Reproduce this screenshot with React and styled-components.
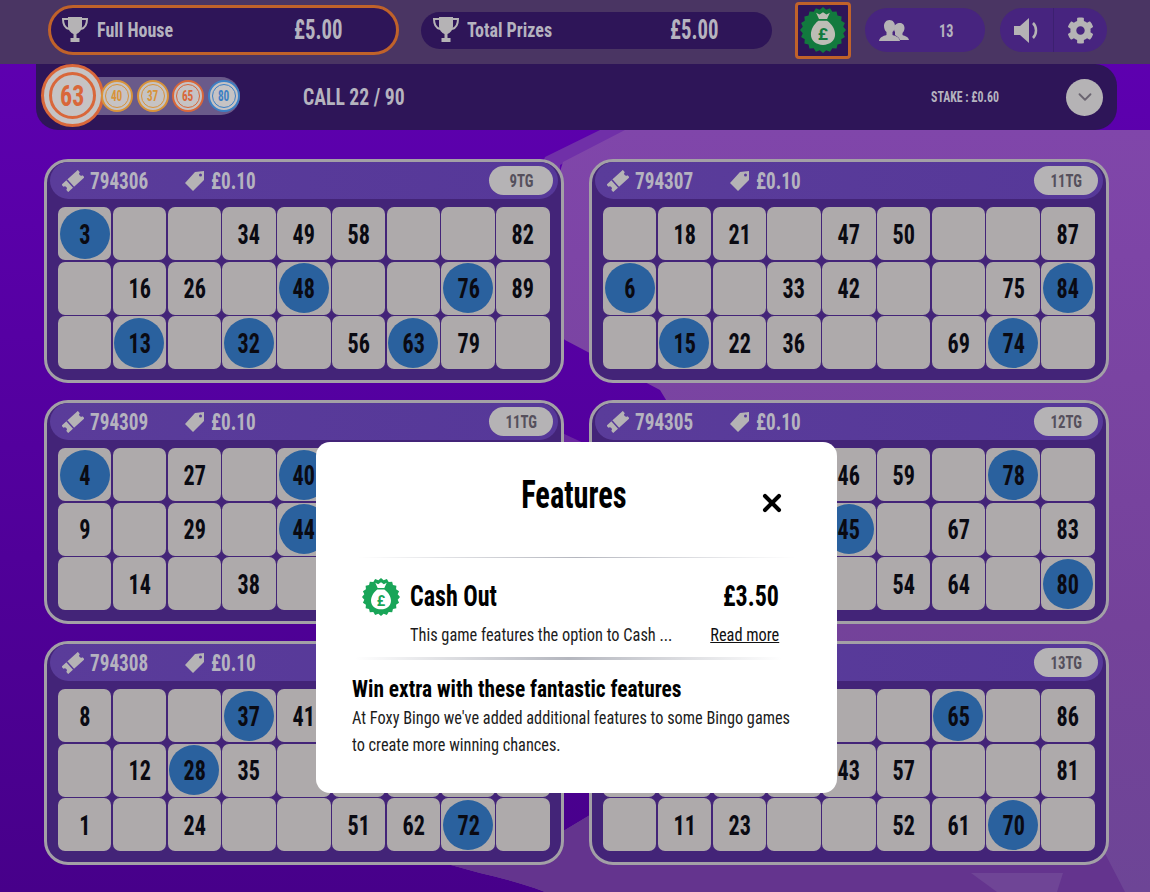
import React from 'react';
import styled, { createGlobalStyle } from 'styled-components';
import { X, ChevronDown } from 'lucide-react';
import { FaCog } from 'react-icons/fa';

const fontStack = `"Roboto Condensed", "Liberation Sans Narrow", Roboto, "Liberation Sans", sans-serif`;

const Global = createGlobalStyle`
	html, body { margin: 0; padding: 0; }
	body { font-family: ${fontStack}; background: #5a00a6; }
	* { box-sizing: border-box; }
`;

const Page = styled.div`
	position: relative;
	width: 1150px;
	height: 892px;
	overflow: hidden;
	background: #5a00a6;
`;

const Backdrop = styled.svg`
	position: absolute;
	inset: 0;
`;

const Content = styled.div`
	position: relative;
	display: flex;
	flex-direction: column;
`;

// the original face is taller and narrower than anything installed
const Fit = styled.span`
	display: inline-block;
	white-space: nowrap;
	transform: scaleX(${(p) => p.$x || 0.82});
	transform-origin: ${(p) => p.$origin || 'left'} center;
`;

const Header = styled.header`
	height: 64px;
	background: #4a3563;
	display: flex;
	align-items: center;
	padding: 0 0 4px 48px;
`;

const Prize = styled.div`
	display: flex;
	align-items: center;
	height: ${(p) => (p.$active ? '50px' : '37px')};
	width: 351px;
	margin-right: ${(p) => (p.$active ? '22px' : '23px')};
	border-radius: 25px;
	background: #2e1558;
	border: ${(p) => (p.$active ? '3px solid #c0622a' : 'none')};
	padding-left: ${(p) => (p.$active ? '10px' : '11px')};
	color: #b5b3bf;
	font-weight: 700;
`;

const PrizeName = styled.span`
	font-size: 20px;
	margin-left: ${(p) => (p.$wide ? '7px' : '8px')};
	width: ${(p) => (p.$wide ? '203px' : '197px')};
`;

const PrizeValue = styled.span`
	font-size: 27px;
`;

const BagButton = styled.div`
	width: 56px;
	height: 57px;
	background: #2e1558;
	border: 3px solid #c0622a;
	border-radius: 4px;
	display: flex;
	align-items: center;
	justify-content: center;
	margin-right: 14px;
`;

const Pill = styled.div`
	height: 44px;
	border-radius: 22px;
	background: #47247f;
	color: #b5b3bf;
	display: flex;
	align-items: center;
`;

const PlayersPill = styled(Pill)`
	width: 120px;
	padding-left: 14px;
	margin-right: 15px;
	font-size: 19px;
	font-weight: 700;
	gap: 30px;
`;

const ControlsPill = styled(Pill)`
	width: 107px;
`;

const ControlSlot = styled.div`
	flex: 1;
	height: 100%;
	display: flex;
	align-items: center;
	justify-content: center;
	border-left: ${(p) => (p.$divider ? '1px solid #3c2070' : 'none')};
`;

const CallBar = styled.div`
	position: relative;
	height: 66px;
	width: 1081px;
	margin-left: 36px;
	background: #2e1558;
	border-radius: 0 22px 22px 22px;
	display: flex;
	align-items: center;
	color: #b5b3bf;
	font-weight: 700;
`;

const Balls = styled.div`
	display: flex;
	align-items: center;
	width: 267px;
	height: 38px;
	flex: none;
`;

const BallTray = styled.div`
	display: flex;
	align-items: center;
	gap: 3.5px;
	height: 38px;
	width: 172px;
	margin-left: 32px;
	margin-top: -3px;
	padding-left: 33px;
	border-radius: 0 19px 19px 0;
	background: #6a5a8a;
`;

const Ball = styled.div`
	position: relative;
	width: ${(p) => p.$size}px;
	height: ${(p) => p.$size}px;
	flex: none;
	border-radius: 50%;
	background: #c6c3c4;
	border: ${(p) => (p.$big ? 3 : 2)}px solid ${(p) => p.$color};
	display: flex;
	align-items: center;
	justify-content: center;
	color: ${(p) => p.$color};
	font-size: ${(p) => (p.$big ? 30 : 15)}px;
	font-weight: 700;

	&::after {
		content: '';
		position: absolute;
		inset: ${(p) => (p.$big ? 5 : 2)}px;
		border-radius: 50%;
		border: ${(p) => (p.$big ? 3 : 1)}px solid ${(p) => p.$color};
	}
`;

const BigBall = styled(Ball)`
	position: absolute;
	left: 5px;
	top: 0;
`;

const CallText = styled.div`
	font-size: 24px;
	width: 628px;
`;

const Stake = styled.div`
	font-size: 15px;
	width: 135px;
`;

const Chevron = styled.div`
	width: 37px;
	height: 37px;
	border-radius: 50%;
	background: #b5b3b5;
	display: flex;
	align-items: center;
	justify-content: center;
	color: #6a6470;
`;

const Cards = styled.div`
	display: grid;
	grid-template-columns: 520px 520px;
	column-gap: 25px;
	row-gap: 17px;
	padding: 29px 0 0 44px;
`;

const Card = styled.section`
	height: 224px;
	border: 3px solid #a3a0a6;
	border-radius: 24px;
	background: #432478;
	padding: 0 11px;
`;

const CardHead = styled.div`
	height: 37px;
	margin: 0 -8px;
	padding: 0 5px 0 12px;
	border-radius: 20px;
	background: linear-gradient(90deg, #5a3c9a, #563899);
	display: flex;
	align-items: center;
	color: #b5b3bf;
	font-weight: 700;
	font-size: 24px;
`;

const HeadItem = styled.span`
	display: flex;
	align-items: center;
	gap: 6px;
	width: 122px;
`;

const Tg = styled.span`
	margin-left: auto;
	width: 64px;
	height: 29px;
	border-radius: 15px;
	background: #b5b3b5;
	color: #55505c;
	font-size: 19px;
	font-weight: 700;
	display: flex;
	align-items: center;
	justify-content: center;
`;

const Grid = styled.div`
	display: grid;
	grid-template-columns: repeat(9, 53.4px);
	grid-auto-rows: 53px;
	column-gap: 1.4px;
	row-gap: 1.5px;
	margin-top: 8px;
`;

const Cell = styled.div`
	border-radius: 7px;
	background: #aeaaab;
	display: flex;
	align-items: center;
	justify-content: center;
	font-size: 27px;
	font-weight: 700;
	color: #0a0a12;
	padding-top: 2px;
`;

const Dab = styled.span`
	width: 50px;
	height: 50px;
	margin-top: -2px;
	border-radius: 50%;
	background: #2a619e;
	display: flex;
	align-items: center;
	justify-content: center;
	padding-top: 2px;
`;

const Modal = styled.div`
	position: absolute;
	left: 316px;
	top: 442px;
	width: 521px;
	height: 351px;
	background: #fff;
	border-radius: 14px;
	color: #000;
	padding: 0 36px;
`;

const ModalTitle = styled.h2`
	margin: 0;
	padding: 31px 6px 0 0;
	height: 115px;
	text-align: center;
	font-size: 38px;
	line-height: 44px;
	font-weight: 700;
`;

const Close = styled.div`
	position: absolute;
	right: 51px;
	top: 47px;
	display: flex;
`;

const Rule = styled.div`
	height: ${(p) => p.$h}px;
	margin: 0 ${(p) => p.$right}px 0 ${(p) => p.$left}px;
	background: linear-gradient(90deg, transparent, #b4b6be 50%, transparent);
`;

const Feature = styled.div`
	display: grid;
	grid-template-columns: 48px minmax(0, 1fr) auto;
	padding: 0 22px 0 10px;
	height: 99px;
`;

const BagSlot = styled.div`
	padding-top: 20px;
`;

const FeatureName = styled.div`
	font-size: 30px;
	line-height: 36px;
	font-weight: 700;
	padding-top: 20px;
	height: 58px;
`;

const FeaturePrice = styled(FeatureName)`
	text-align: right;
`;

const FeatureText = styled.div`
	font-size: 19px;
	line-height: 26px;
	margin-top: 6px;
	color: #1c1c1c;
`;

const ReadMore = styled(FeatureText)`
	text-align: right;
`;

const ReadLink = styled(Fit)`
	color: #111;
	text-decoration: underline;
`;

const WinTitle = styled.h3`
	margin: 14px 0 0;
	font-size: 24px;
	line-height: 30px;
	font-weight: 700;
`;

const WinText = styled.p`
	margin: 0;
	font-size: 18px;
	line-height: 27px;
	color: #1c1c1c;
`;

const Trophy = () => (
	<svg width="28" height="28" viewBox="0 0 28 28" fill="#b5b3b5">
		<path d="M7 1h14v9c0 4-3 7-5.500 8v4h3v4H9.500v-4h3v-4C10 17 7 14 7 10z" />
		<path
			d="M7 3H2c0 6 2 9 6 10M21 3h5c0 6-2 9-6 10"
			fill="none"
			stroke="#b5b3b5"
			strokeWidth="2"
		/>
	</svg>
);

const Players = () => (
	<svg width="30" height="23" viewBox="0 0 30 23" fill="#b5b3b5">
		<path d="M21 4c3 0 4.500 2.500 4.500 5 0 2-1 4-2 5v2c2.500 1 6 2 6.500 5H21c-1-3-4-4-5-5v-3c-1-1-1-3-1-4 0-3 3-5 6-5z" />
		<path d="M10.500 1c3.500 0 5.500 3 5.500 6 0 2.500-1 5-2.500 6v3c3.500 1 7 2.500 7.500 6H0c.5-3.500 4-5 7.500-6v-3C6 12 5 9.500 5 7c0-3 2-6 5.500-6z" />
	</svg>
);

const Speaker = () => (
	<svg width="27" height="27" viewBox="0 0 27 27" fill="#b5b3b5">
		<path d="M1 9h6l9-8v25l-9-8H1z" />
		<path d="M20 6c4 4 4 11 0 15" fill="none" stroke="#b5b3b5" strokeWidth="2.500" />
	</svg>
);

const Ticket = () => (
	<svg width="22" height="22" viewBox="0 0 22 22" fill="#b5b3b5">
		<g transform="rotate(-42 11 11)">
			<path
				fillRule="evenodd"
				d="M0 6h22v3a2 2 0 0 0 0 4v3H0v-3a2 2 0 0 0 0-4zM6.500 6v10h1.500V6z"
			/>
		</g>
	</svg>
);

const Tag = () => (
	<svg width="21" height="22" viewBox="0 0 21 22" fill="#b5b3b5">
		<path
			fillRule="evenodd"
			d="M11 2l9-1v9L9 21 1 13zM16.500 3.500a1.500 1.500 0 1 0 0 3 1.500 1.500 0 0 0 0-3z"
		/>
	</svg>
);

// scalloped badge with a money bag in the middle
const BagBadge = ({ size, green, light }) => {
	const points = [];
	const teeth = 20;
	for (let i = 0; i < teeth * 2; i++) {
		const r = i % 2 === 0 ? 20 : 17.8;
		const a = (Math.PI * i) / teeth;
		points.push(`${20 + r * Math.cos(a)},${20 + r * Math.sin(a)}`);
	}
	return (
		<svg width={size} height={size} viewBox="0 0 40 40">
			<polygon points={points.join(' ')} fill={green} />
			<path
				d="M14 5l3 1.500L20 4.500l3 2L26 5l-2.500 5.500h-7zM16.500 12h7c4.500 3 7 7.500 7 12 0 5.500-4.500 9-10.500 9s-10.500-3.500-10.500-9c0-4.500 2.500-9 6.500-12z"
				fill={light}
			/>
			<text x="20" y="29" textAnchor="middle" fontSize="15" fontWeight="700" fontFamily="Roboto" fill={green}>
				£
			</text>
		</svg>
	);
};

const cards = [
	{
		id: '794306',
		tg: '9TG',
		rows: [
			['3', '', '', '34', '49', '58', '', '', '82'],
			['', '16', '26', '', '48', '', '', '76', '89'],
			['', '13', '', '32', '', '56', '63', '79', ''],
		],
		marked: ['3', '48', '76', '13', '32', '63'],
	},
	{
		id: '794307',
		tg: '11TG',
		rows: [
			['', '18', '21', '', '47', '50', '', '', '87'],
			['6', '', '', '33', '42', '', '', '75', '84'],
			['', '15', '22', '36', '', '', '69', '74', ''],
		],
		marked: ['6', '84', '15', '74'],
	},
	{
		id: '794309',
		tg: '11TG',
		rows: [
			['4', '', '27', '', '40', '', '', '', ''],
			['9', '', '29', '', '44', '', '', '', ''],
			['', '14', '', '38', '', '', '', '', ''],
		],
		marked: ['4', '40', '44'],
	},
	{
		id: '794305',
		tg: '12TG',
		rows: [
			['', '', '', '', '46', '59', '', '78', ''],
			['', '', '', '', '45', '', '67', '', '83'],
			['', '', '', '', '', '54', '64', '', '80'],
		],
		marked: ['78', '45', '80'],
	},
	{
		id: '794308',
		tg: '10TG',
		rows: [
			['8', '', '', '37', '41', '', '', '', ''],
			['', '12', '28', '35', '', '', '', '', ''],
			['1', '', '24', '', '', '51', '62', '72', ''],
		],
		marked: ['37', '28', '72'],
	},
	{
		id: '794310',
		tg: '13TG',
		rows: [
			['', '', '', '', '', '', '65', '', '86'],
			['', '', '', '', '43', '57', '', '', '81'],
			['', '11', '23', '', '', '52', '61', '70', ''],
		],
		marked: ['65', '70'],
	},
];

const recent = [
	{ n: '40', color: '#d8933a' },
	{ n: '37', color: '#d8933a' },
	{ n: '65', color: '#d9673a' },
	{ n: '80', color: '#3d7fc4' },
];

const App = () => (
	<Page>
		<Global />
		<Backdrop width="1150" height="892" viewBox="0 0 1150 892">
			<defs>
				<linearGradient id="dark" x1="0" y1="0" x2="0" y2="1">
					<stop offset="0" stopColor="#5f00b2" />
					<stop offset="1" stopColor="#47008a" />
				</linearGradient>
				<linearGradient id="light" x1="0" y1="0" x2="0" y2="1">
					<stop offset="0" stopColor="#8046aa" />
					<stop offset="0.65" stopColor="#74429a" />
					<stop offset="1" stopColor="#6d4596" />
				</linearGradient>
			</defs>
			<rect width="1150" height="892" fill="url(#dark)" />
			<path d="M545 157 600 130h30l-70 35v20h-25z" fill="#7030a8" />
			<path d="M560 432l30 14v20h-30z" fill="#6a28a0" />
			<path
				d="M625 130H1150V892H545C520 882 500 878 480 873L440 862 565 830 590 815 800 620 660 390 565 340 520 300 563 162z"
				fill="url(#light)"
			/>
			<path d="M440 862 565 830 590 815H1085L1125 892H545C520 882 500 878 480 873z" fill="#64348e" />
			<path d="M971 873h92l-6 19h-60z" fill="#6f4596" />
		</Backdrop>
		<Content>
			<Header>
				<Prize $active>
					<Trophy />
					<PrizeName>
						<Fit $x={0.9}>Full House</Fit>
					</PrizeName>
					<PrizeValue>
						<Fit $x={0.77}>£5.00</Fit>
					</PrizeValue>
				</Prize>
				<Prize>
					<Trophy />
					<PrizeName $wide>
						<Fit $x={0.9}>Total Prizes</Fit>
					</PrizeName>
					<PrizeValue>
						<Fit $x={0.77}>£5.00</Fit>
					</PrizeValue>
				</Prize>
				<BagButton>
					<BagBadge size={46} green="#127a3e" light="#bdbdb5" />
				</BagButton>
				<PlayersPill>
					<Players />
					<Fit $x={0.75}>13</Fit>
				</PlayersPill>
				<ControlsPill>
					<ControlSlot>
						<Speaker />
					</ControlSlot>
					<ControlSlot $divider>
						<FaCog size={27} color="#b5b3b5" />
					</ControlSlot>
				</ControlsPill>
			</Header>
			<CallBar>
				<BigBall $big $size={63} $color="#d9673a">
					<Fit $x={0.8} $origin="center">63</Fit>
				</BigBall>
				<Balls>
					<BallTray>
						{recent.map((b) => (
							<Ball key={b.n} $size={32} $color={b.color}>
								<Fit $x={0.75} $origin="center">{b.n}</Fit>
							</Ball>
						))}
					</BallTray>
				</Balls>
				<CallText>
					<Fit $x={0.82}>CALL 22 / 90</Fit>
				</CallText>
				<Stake>
					<Fit $x={0.79}>STAKE : £0.60</Fit>
				</Stake>
				<Chevron>
					<ChevronDown size={22} />
				</Chevron>
			</CallBar>
			<Cards>
				{cards.map((card) => (
					<Card key={card.id}>
						<CardHead>
							<HeadItem>
								<Ticket />
								<Fit $x={0.8}>{card.id}</Fit>
							</HeadItem>
							<HeadItem>
								<Tag />
								<Fit $x={0.8}>£0.10</Fit>
							</HeadItem>
							<Tg>
								<Fit $x={0.78} $origin="center">{card.tg}</Fit>
							</Tg>
						</CardHead>
						<Grid>
							{card.rows.flat().map((n, i) => (
								<Cell key={i}>
									{card.marked.includes(n) ? (
										<Dab>
											<Fit $origin="center">{n}</Fit>
										</Dab>
									) : (
										<Fit $origin="center">{n}</Fit>
									)}
								</Cell>
							))}
						</Grid>
					</Card>
				))}
			</Cards>
		</Content>
		<Modal>
			<ModalTitle>
				<Fit $x={0.8} $origin="center">Features</Fit>
			</ModalTitle>
			<Close>
				<X size={28} strokeWidth={3.5} />
			</Close>
			<Rule $h={1} $left={6} $right={6} />
			<Feature>
				<BagSlot>
					<BagBadge size={38} green="#19a558" light="#fff" />
				</BagSlot>
				<div>
					<FeatureName>
						<Fit $x={0.8}>Cash Out</Fit>
					</FeatureName>
					<FeatureText>
						<Fit $x={0.86}>This game features the option to Cash ...</Fit>
					</FeatureText>
				</div>
				<div>
					<FeaturePrice>
						<Fit $x={0.8} $origin="right">£3.50</Fit>
					</FeaturePrice>
					<ReadMore>
						<ReadLink $x={0.86} $origin="right">Read more</ReadLink>
					</ReadMore>
				</div>
			</Feature>
			<Rule $h={3} $left={3} $right={19} />
			<WinTitle>
				<Fit $x={0.89}>Win extra with these fantastic features</Fit>
			</WinTitle>
			<WinText>
				<Fit $x={0.905}>At Foxy Bingo we've added additional features to some Bingo games</Fit>
				<br />
				<Fit $x={0.905}>to create more winning chances.</Fit>
			</WinText>
		</Modal>
	</Page>
);

export default App;
